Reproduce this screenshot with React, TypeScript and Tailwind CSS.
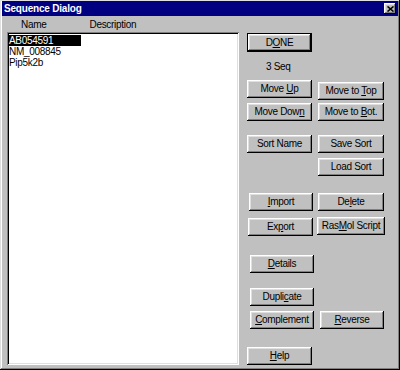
import React from "react";

const font = { fontFamily: '"Liberation Sans", Arial, sans-serif' };

const bevel =
  "bg-[#c0c0c0] shadow-[inset_-1px_-1px_#000000,inset_1px_1px_#ffffff,inset_-2px_-2px_#808080,inset_2px_2px_#dfdfdf]";

function U({ children }: { children: React.ReactNode }) {
  return <span className="underline underline-offset-[1px]">{children}</span>;
}

function Btn({
  w,
  h = "h-[18px]",
  cls = "",
  children,
}: {
  w: string;
  h?: string;
  cls?: string;
  children: React.ReactNode;
}) {
  return (
    <div
      className={`${w} ${h} ${cls} ${bevel} flex items-center justify-center text-[10px] leading-none tracking-[-0.3px] text-black`}
    >
      <span className="whitespace-pre">{children}</span>
    </div>
  );
}

export default function App() {
  return (
    <div
      style={font}
      className="w-[400px] h-[370px] bg-[#c0c0c0] flex flex-col px-[2px] pt-[1px] shadow-[inset_-1px_-1px_#000000,inset_1px_1px_#dfdfdf,inset_-2px_-2px_#808080,inset_2px_2px_#ffffff]"
    >
      {/* Title bar */}
      <div className="h-[15px] bg-[#000080] flex items-center justify-between pl-[2px] pr-[2px]">
        <span className="text-white font-bold text-[10px] tracking-[-0.2px] leading-none">
          Sequence Dialog
        </span>
        <div className={`w-[12px] h-[11px] ${bevel} flex items-center justify-center`}>
          <svg width="7" height="6" viewBox="0 0 7 6">
            <path d="M0.5 0.5 L6.5 5.5 M6.5 0.5 L0.5 5.5" stroke="#000" strokeWidth="1.6" />
          </svg>
        </div>
      </div>

      {/* Body */}
      <div className="flex flex-row flex-1">
        {/* Left: list */}
        <div className="flex flex-col ml-[5px] w-[232px]">
          <div className="flex flex-row h-[16px] items-end pb-[2px] text-[10px] leading-none tracking-[-0.3px] text-black">
            <span className="ml-[14px]">Name</span>
            <span className="ml-[43px]">Description</span>
          </div>
          <div className="h-[333px] bg-white shadow-[inset_1px_1px_#808080,inset_-1px_-1px_#ffffff,inset_2px_2px_#000000,inset_-2px_-2px_#dfdfdf] pt-[3px] pl-[2px]">
            <div className="flex flex-col text-[10px] leading-[11px] tracking-[-0.3px] text-black">
              <div className="w-[72px] h-[11px] bg-black text-white">AB054591</div>
              <div className="h-[11px]">NM_008845</div>
              <div className="h-[11px]">Pip5k2b</div>
            </div>
          </div>
        </div>

        {/* Right: buttons */}
        <div className="flex flex-col flex-1">
          <div className="flex flex-row pl-[8px] mt-[17px]">
            <div className="w-[65px] h-[19px] border border-black flex">
              <Btn w="w-full" h="h-full">
                D<U>O</U>NE
              </Btn>
            </div>
          </div>

          <div className="pl-[27px] mt-[10px] h-[10px] text-[10px] leading-[10px] tracking-[-0.3px] text-black">
            3 Seq
          </div>

          <div className="flex flex-row items-start pl-[8px] gap-[6px] mt-[8px]">
            <Btn w="w-[65px]">
              Move <U>U</U>p
            </Btn>
            <Btn w="w-[66px]" cls="mt-[2px]">
              Move to <U>T</U>op
            </Btn>
          </div>

          <div className="flex flex-row items-start pl-[8px] gap-[6px] mt-[3px]">
            <Btn w="w-[65px]">
              Move Dow<U>n</U>
            </Btn>
            <Btn w="w-[66px]">
              Move to <U>B</U>ot.
            </Btn>
          </div>

          <div className="flex flex-row items-start pl-[8px] gap-[6px] mt-[14px]">
            <Btn w="w-[65px]">Sort Name</Btn>
            <Btn w="w-[66px]">Save Sort</Btn>
          </div>

          <div className="flex flex-row items-start pl-[79px] mt-[5px]">
            <Btn w="w-[66px]">Load Sort</Btn>
          </div>

          <div className="flex flex-row items-start pl-[10px] gap-[5px] mt-[17px]">
            <Btn w="w-[64px]">
              <U>I</U>mport
            </Btn>
            <Btn w="w-[66px]">
              De<U>l</U>ete
            </Btn>
          </div>

          <div className="flex flex-row items-start pl-[9px] gap-[4px] mt-[6px]">
            <Btn w="w-[65px]" cls="mt-[1px]">
              Ex<U>p</U>ort
            </Btn>
            <Btn w="w-[68px]">
              Ras<U>M</U>ol Script
            </Btn>
          </div>

          <div className="flex flex-row items-start pl-[11px] mt-[19px]">
            <Btn w="w-[64px]">
              <U>D</U>etails
            </Btn>
          </div>

          <div className="flex flex-row items-start pl-[11px] mt-[15px]">
            <Btn w="w-[64px]">
              Dupli<U>c</U>ate
            </Btn>
          </div>

          <div className="flex flex-row items-start pl-[11px] gap-[6px] mt-[5px]">
            <Btn w="w-[64px]">
              <U>C</U>omplement
            </Btn>
            <Btn w="w-[64px]">
              <U>R</U>everse
            </Btn>
          </div>

          <div className="flex flex-row items-start pl-[8px] mt-[18px]">
            <Btn w="w-[65px]">
              <U>H</U>elp
            </Btn>
          </div>
        </div>
      </div>
    </div>
  );
}
